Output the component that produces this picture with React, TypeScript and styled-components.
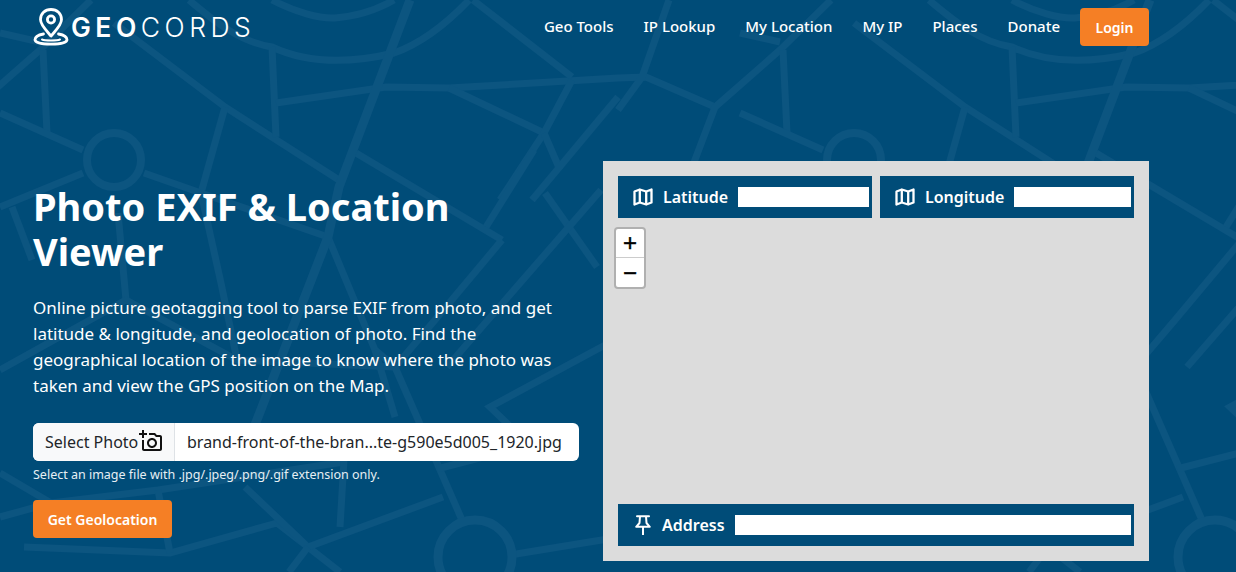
import React from "react";
import styled, { createGlobalStyle } from "styled-components";
import { MdOutlineAddAPhoto } from "react-icons/md";

const Global = createGlobalStyle`
  html, body { margin: 0; padding: 0; background: #004c78; overflow: hidden; }
  * { box-sizing: border-box; }
`;

const Page = styled.div`
  position: relative;
  width: 1236px;
  height: 572px;
  overflow: hidden;
  background: #004c78;
  font-family: "Noto Sans", "Open Sans", sans-serif;
  color: #fff;
`;
const Backdrop = styled.svg`
  position: absolute;
  inset: 0;
  width: 1236px;
  height: 572px;
`;
const Content = styled.div`
  position: relative;
  width: 1116px;
  margin-left: 33px;
`;
const Header = styled.header`
  height: 54px;
  display: flex;
  align-items: flex-start;
  justify-content: space-between;
`;
const Logo = styled.div`
  display: flex;
  align-items: center;
  height: 54px;
`;
const LogoText = styled.div`
  font-family: Inter, sans-serif;
  font-size: 26.5px;
  line-height: 26px;
  letter-spacing: 4.5px;
  font-weight: 300;
  margin-left: 2px;
  b { font-weight: 600; }
`;
const Nav = styled.nav`
  display: flex;
  align-items: center;
  gap: 30px;
  height: 38px;
  margin-top: 8px;
`;
const NavLink = styled.a`
  font-size: 15px;
  line-height: 36px;
  height: 38px;
  font-weight: 500;
  color: #fff;
`;
const OrangeButton = styled.button`
  height: 38px;
  width: 139px;
  padding: 0;
  border: none;
  border-radius: 4px;
  background: #f57f25;
  color: #fff;
  font-family: inherit;
  font-size: 14px;
  font-weight: 600;
`;
const LoginButton = styled(OrangeButton)`
  margin-left: -10px;
  width: 69px;
`;
const Hero = styled.main`
  display: grid;
  grid-template-columns: 546px 546px;
  gap: 24px;
  align-items: start;
  margin-top: 107px;
`;
const Intro = styled.section`
  display: flex;
  flex-direction: column;
  align-items: flex-start;
  padding-top: 23px;
`;
const Title = styled.h1`
  margin: 0;
  font-size: 38px;
  line-height: 45px;
  font-weight: 700;
`;
const Lead = styled.p`
  margin: 21px 0 24px;
  font-size: 17px;
  line-height: 26px;
`;
const FileBox = styled.div`
  width: 100%;
  height: 38px;
  display: flex;
  align-items: center;
  border-radius: 6px;
  background: #fff;
  overflow: hidden;
  color: #212529;
`;
const FileLabel = styled.div`
  height: 100%;
  width: 142px;
  display: flex;
  align-items: center;
  padding-left: 12px;
  background: #f8f9fa;
  border-right: 1px solid #dee2e6;
  font-size: 16px;
  white-space: nowrap;
  svg { margin-left: 1px; margin-top: -3px; flex: none; }
`;
const FileName = styled.div`
  padding-left: 12px;
  font-size: 16px;
  white-space: nowrap;
`;
const Hint = styled.small`
  display: block;
  margin: 5px 0 16px;
  font-size: 12.5px;
  line-height: 18px;
  color: #e6eff4;
`;
const Panel = styled.section`
  height: 400px;
  background: #dcdcdc;
  padding: 15px;
  display: flex;
  flex-direction: column;
`;
const CoordRow = styled.div`
  display: grid;
  grid-template-columns: 254px 254px;
  gap: 8px;
`;
const FieldBar = styled.div`
  height: 42px;
  background: #004c78;
  display: flex;
  align-items: center;
  padding: 0 3px 0 15px;
  color: #fff;
  font-size: 16px;
  font-weight: 600;
  svg { flex: none; }
`;
const FieldLabel = styled.span<{ $gap: number }>`
  margin: 0 10px 0 ${(p) => p.$gap}px;
`;
const FieldInput = styled.div`
  flex: 1;
  height: 20px;
  background: #fff;
`;
const MapArea = styled.div`
  flex: 1;
  margin: 9px 0 0 -4px;
`;
const ZoomBox = styled.div`
  width: 32px;
  height: 62px;
  border: 2px solid #b0b0b0;
  border-radius: 4px;
  background: #fff;
  overflow: hidden;
  color: #000;
`;
const ZoomButton = styled.div<{ $last?: boolean }>`
  height: 29px;
  display: flex;
  align-items: center;
  justify-content: center;
  font-family: "Liberation Sans", sans-serif;
  font-size: 24px;
  font-weight: 400;
  line-height: 22px;
  -webkit-text-stroke: 0.4px #000;
  border-bottom: ${(p) => (p.$last ? "none" : "1px solid #ccc")};
`;

const MapIcon = () => (
  <svg width="20" height="18" viewBox="0 0 20 18" fill="none" stroke="#fff" strokeWidth="2.3" strokeLinejoin="round">
    <path d="M1.5 3.5 L6.8 1.5 L13.2 3.5 L18.5 1.5 V14.5 L13.2 16.5 L6.8 14.5 L1.5 16.5 Z" />
    <path d="M6.8 1.5 V14.5 M13.2 3.5 V16.5" />
  </svg>
);
const PinIcon = () => (
  <svg width="16" height="20" viewBox="0 0 16 20" fill="none" stroke="#fff" strokeWidth="2" style={{ marginLeft: 2 }}>
    <path d="M2 1.2 H14" strokeLinecap="round" />
    <path d="M5 1.2 L4.5 8 L1.2 11.8 H14.8 L11.5 8 L11 1.2" strokeLinejoin="round" />
    <path d="M8 12 V19.5" strokeLinecap="round" />
  </svg>
);
const LogoMark = () => (
  <svg width="36" height="38" viewBox="0 0 36 38" fill="none" stroke="#fff" strokeWidth="2.8">
    <path d="M18 28 C13 22 7.5 17 7.5 11.5 C7.5 5.5 12 1.5 18 1.5 C24 1.5 28.5 5.5 28.5 11.5 C28.5 17 23 22 18 28 Z" strokeLinejoin="round" />
    <circle cx="18" cy="11.5" r="3.6" />
    <path d="M10.5 26 C5 27 2 29.5 2 31.8 C2 34.8 9 36.2 18 36.2 C27 36.2 34 34.8 34 31.8 C34 29.5 31 27 25.5 26" strokeLinecap="round" />
    <path d="M9 31.5 C12 32.8 24 32.8 27 31.5" strokeLinecap="round" strokeWidth="2" />
  </svg>
);

const roads: string[] = [
  "M91 0 L40 50 L-25 107 L-47 165",
  "M0 33 L40 42",
  "M43 50 L47 133",
  "M0 113 L83 150",
  "M83 173 L0 207",
  "M114 23 L225 107 L339 180",
  "M225 107 L201 193",
  "M144 173 L201 193 L328 237",
  "M189 0 C215 22 240 42 272 47 C300 60 340 66 394 53 C425 42 450 20 469 0",
  "M272 0 C295 12 320 19 335 18 C360 16 380 8 394 0",
  "M272 47 L276 137",
  "M276 103 L386 87 L449 88 L618 78 L646 77 L715 107",
  "M449 88 L544 133",
  "M473 0 L572 77",
  "M572 80 L544 133 L500 200",
  "M544 133 L560 170",
  "M618 97 L532 200",
  "M669 0 L642 77 L618 110",
  "M356 153 L502 240",
  "M118 213 L126 300",
  "M201 193 L221 283 L237 360",
  "M328 237 L375 350 L395 367",
  "M486 227 L534 150",
  "M502 240 L435 320 L395 367",
  "M545 193 L597 267",
  "M601 190 L447 367",
  "M0 370 L126 300 L237 360 L395 367",
  "M620 337 L490 407 L514 430",
  "M12 207 L32 260",
  "M0 473 L51 503 L158 490 L344 462",
  "M0 517 L51 503",
  "M24 547 L170 553 L277 523 L308 547",
  "M245 487 L308 547 L340 572",
  "M308 547 L443 497",
  "M395 367 L462 520",
  "M344 460 L340 527",
  "M158 490 L170 553",
  "M308 547 L289 572",
  "M510 555 L620 537",
  "M437 469 L530 445",
  "M375 350 L395 417",
];

const App: React.FC = () => (
  <Page>
    <Global />
    <Backdrop viewBox="0 0 1236 572" aria-hidden="true">
      <defs>
        <g id="tile" fill="none" stroke="#0c5580" strokeWidth="7">
          {roads.map((d) => (
            <path key={d} d={d} />
          ))}
          <path d="M410 0 L339 187 L328 237 L253 430" strokeWidth="9" />
          <circle cx="114" cy="160" r="27" strokeWidth="8" />
          <circle cx="475" cy="557" r="37" strokeWidth="9" />
        </g>
      </defs>
      <use href="#tile" x="0" />
      <use href="#tile" x="740" />
    </Backdrop>
    <Content>
      <Header>
        <Logo>
          <LogoMark />
          <LogoText>
            <b>GEO</b>CORDS
          </LogoText>
        </Logo>
        <Nav>
          <NavLink>Geo Tools</NavLink>
          <NavLink>IP Lookup</NavLink>
          <NavLink>My Location</NavLink>
          <NavLink>My IP</NavLink>
          <NavLink>Places</NavLink>
          <NavLink>Donate</NavLink>
          <LoginButton>Login</LoginButton>
        </Nav>
      </Header>
      <Hero>
        <Intro>
          <Title>Photo EXIF &amp; Location Viewer</Title>
          <Lead>
            Online picture geotagging tool to parse EXIF from photo, and get latitude &amp; longitude, and geolocation
            of photo. Find the geographical location of the image to know where the photo was taken and view the GPS
            position on the Map.
          </Lead>
          <FileBox>
            <FileLabel>
              Select Photo
              <MdOutlineAddAPhoto size={24} color="#111" />
            </FileLabel>
            <FileName>brand-front-of-the-bran...te-g590e5d005_1920.jpg</FileName>
          </FileBox>
          <Hint>Select an image file with .jpg/.jpeg/.png/.gif extension only.</Hint>
          <OrangeButton>Get Geolocation</OrangeButton>
        </Intro>
        <Panel>
          <CoordRow>
            <FieldBar>
              <MapIcon />
              <FieldLabel $gap={10}>Latitude</FieldLabel>
              <FieldInput />
            </FieldBar>
            <FieldBar>
              <MapIcon />
              <FieldLabel $gap={10}>Longitude</FieldLabel>
              <FieldInput />
            </FieldBar>
          </CoordRow>
          <MapArea>
            <ZoomBox>
              <ZoomButton>+</ZoomButton>
              <ZoomButton $last>−</ZoomButton>
            </ZoomBox>
          </MapArea>
          <FieldBar>
            <PinIcon />
            <FieldLabel $gap={11}>Address</FieldLabel>
            <FieldInput />
          </FieldBar>
        </Panel>
      </Hero>
    </Content>
  </Page>
);

export default App;
